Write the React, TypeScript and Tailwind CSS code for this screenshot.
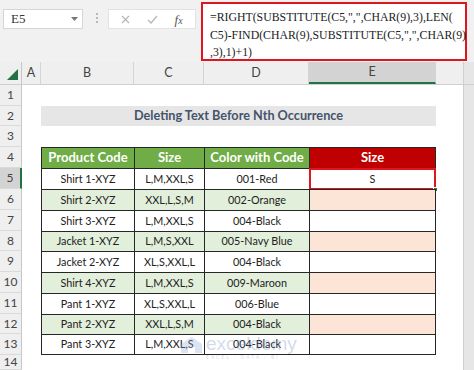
import React from 'react';

type Row = {
  product: string;
  size: string;
  color: string;
  result?: string;
};

const rows: Row[] = [
  { product: 'Shirt 1-XYZ', size: 'L,M,XXL,S', color: '001-Red', result: 'S' },
  { product: 'Shirt 2-XYZ', size: 'XXL,L,S,M', color: '002-Orange' },
  { product: 'Shirt 3-XYZ', size: 'L,M,XXL,S', color: '004-Black' },
  { product: 'Jacket 1-XYZ', size: 'L,M,S,XXL', color: '005-Navy Blue' },
  { product: 'Jacket 2-XYZ', size: 'XL,S,XXL,L', color: '004-Black' },
  { product: 'Shirt 4-XYZ', size: 'L,M,XXL,S', color: '009-Maroon' },
  { product: 'Pant 1-XYZ', size: 'XL,S,XXL,L', color: '006-Blue' },
  { product: 'Pant 2-XYZ', size: 'XXL,L,S,M', color: '004-Black' },
  { product: 'Pant 3-XYZ', size: 'L,M,XXL,S', color: '004-Black' },
];

// row heights for rows 1..14 (row 14 is cut off by the window)
const heights = [21, 20, 21, 21, 21, 21, 21, 20, 21, 21, 21, 20, 21, 15];

function RowHead({ n, h, active }: { n: number; h: number; active?: boolean }) {
  return (
    <div
      className={
        'w-[22px] shrink-0 flex items-center justify-center text-[12px] text-[#444] border-b border-[#dadada] ' +
        (active ? 'bg-[#d3d3d3] border-r-2 border-r-[#217346]' : 'bg-[#efefef] border-r border-r-[#c6c6c6]')
      }
      style={{ height: h }}
    >
      {n}
    </div>
  );
}

function Cell({
  w,
  className = '',
  children,
}: {
  w: string;
  className?: string;
  children?: React.ReactNode;
}) {
  return (
    <div className={`${w} shrink-0 flex items-center justify-center whitespace-nowrap border-l border-t border-[#262626] ${className}`}>
      {children}
    </div>
  );
}

function TopBar() {
  return (
    <div className="h-[62px] bg-[#f1f1f1] flex items-start relative">
      <div className="ml-[3px] mt-[9px] w-[80px] h-[20px] bg-white border border-[#d6d6d6] flex items-center justify-between pl-[7px] pr-[4px]">
        <span className="font-['Liberation_Serif',serif] text-[13px] text-[#333]">E5</span>
        <svg width="7" height="4" viewBox="0 0 7 4">
          <path d="M0 0 L7 0 L3.5 4 Z" fill="#777" />
        </svg>
      </div>
      <div className="mt-[13px] ml-[13px] flex flex-col gap-[2px]">
        <span className="w-[2px] h-[2px] bg-[#b8b8b8]" />
        <span className="w-[2px] h-[2px] bg-[#b8b8b8]" />
        <span className="w-[2px] h-[2px] bg-[#b8b8b8]" />
      </div>
      <div className="ml-[10px] mt-[9px] w-[88px] h-[20px] bg-white border border-[#e2e2e2] flex items-center justify-around px-[4px]">
        <svg width="9" height="9" viewBox="0 0 9 9">
          <path d="M1 1 L8 8 M8 1 L1 8" stroke="#b5b5b5" strokeWidth="1.2" />
        </svg>
        <svg width="11" height="9" viewBox="0 0 11 9">
          <path d="M1 5 L4 8 L10 1" stroke="#b5b5b5" strokeWidth="1.2" fill="none" />
        </svg>
        <span className="font-['Liberation_Serif',serif] italic text-[13px] text-[#555] leading-none">
          f<span className="text-[10px]">x</span>
        </span>
      </div>
      <div className="ml-[5px] mt-[2px] w-[266px] h-[59px] bg-white border-2 border-[#e0161e] pl-[7px] pt-[5px] font-['Liberation_Serif',serif] text-[11.8px] leading-[17.5px] text-[#222] whitespace-nowrap">
        <div>=RIGHT(SUBSTITUTE(C5,",",CHAR(9),3),LEN(</div>
        <div>C5)-FIND(CHAR(9),SUBSTITUTE(C5,",",CHAR(9)</div>
        <div>,3),1)+1)</div>
      </div>
    </div>
  );
}

function ColumnHeader() {
  const col = 'shrink-0 h-full flex items-center justify-center border-r border-[#d4d4d4]';
  return (
    <div className="h-[23px] flex bg-[#efefef] border-b border-[#cfcfcf] text-[12.5px] text-[#444]">
      <div className="w-[22px] shrink-0 flex items-end justify-end pr-[3px] pb-[4px] border-r border-[#c6c6c6]">
        <svg width="11" height="11" viewBox="0 0 11 11">
          <path d="M11 0 L11 11 L0 11 Z" fill="#217346" />
        </svg>
      </div>
      <div className={`w-[19px] ${col}`}>A</div>
      <div className={`w-[93px] ${col}`}>B</div>
      <div className={`w-[70px] ${col}`}>C</div>
      <div className={`w-[105px] ${col}`}>D</div>
      <div className={`w-[127px] ${col} bg-[#d3d3d3] border-b-2 border-b-[#217346]`}>E</div>
      <div className="w-[27px] shrink-0" />
      <div className="w-[11px] shrink-0 bg-[#e6e6e6] border-l border-[#cfcfcf]" />
    </div>
  );
}

export default function App() {
  return (
    <div className="w-[474px] h-[370px] overflow-hidden bg-white relative font-['Lato','Noto_Sans',sans-serif]">
      <TopBar />
      <ColumnHeader />
      <div className="flex">
        <div className="flex flex-col">
          {heights.map((h, i) => {
            const n = i + 1;
            const r = n >= 5 && n <= 13 ? rows[n - 5] : undefined;
            const even = n % 2 === 0;
            return (
              <div key={n} className="flex" style={{ height: h }}>
                <RowHead n={n} h={h} active={n === 5} />
                <div className="w-[19px] shrink-0" />
                {n === 2 && (
                  <div className="w-[395px] shrink-0 bg-[#e7e6e6] flex items-center justify-center font-bold text-[12.7px] text-[#44546a]">
                    Deleting Text Before Nth Occurrence
                  </div>
                )}
                {n === 4 && (
                  <div className="flex font-bold text-[13px] text-white">
                    <Cell w="w-[93px]" className="bg-[#70ad47]">Product Code</Cell>
                    <Cell w="w-[70px]" className="bg-[#70ad47]">Size</Cell>
                    <Cell w="w-[105px]" className="bg-[#70ad47]">Color with Code</Cell>
                    <Cell w="w-[127px]" className="bg-[#c00000] border-r">Size</Cell>
                  </div>
                )}
                {r && (
                  <div className={`flex text-[10.8px] text-[#222] ${n === 13 ? '[&>div]:border-b' : ''}`}>
                    <Cell w="w-[93px]" className={even ? 'bg-[#e2efda]' : 'bg-white'}>{r.product}</Cell>
                    <Cell w="w-[70px]" className={even ? 'bg-[#e2efda]' : 'bg-white'}>{r.size}</Cell>
                    <Cell w="w-[105px]" className={even ? 'bg-[#e2efda]' : 'bg-white'}>{r.color}</Cell>
                    <Cell w="w-[127px]" className={`border-r relative ${even ? 'bg-[#fce4d6]' : 'bg-white'}`}>
                      {r.result}
                      {n === 5 && (
                        <>
                          <div className="absolute -left-px -top-px -right-px -bottom-px border-2 border-[#e0161e]" />
                          <div className="absolute -right-[3px] -bottom-[3px] w-[5px] h-[5px] bg-[#217346] border border-white" />
                        </>
                      )}
                    </Cell>
                  </div>
                )}
              </div>
            );
          })}
        </div>
        <div className="flex-1" />
        <div className="w-[11px] shrink-0 bg-[#e6e6e6] border-l border-[#cfcfcf]" />
      </div>

      <div className="absolute left-[180px] top-[334px] flex items-start gap-[3px] opacity-30 pointer-events-none">
        <svg width="23" height="18" viewBox="0 0 23 18" className="mt-[2px]">
          <path d="M1 8 L11.5 1 L22 8 L22 17 L1 17 Z" fill="#8ea6d6" />
          <path d="M8 17 L8 11 L15 11 L15 17" fill="#ffffff" />
        </svg>
        <div className="flex flex-col leading-none">
          <span className="text-[19px] text-[#6f8bc4] font-['Liberation_Sans',sans-serif]">exceldemy</span>
          <span className="text-[5px] text-[#6f8bc4] tracking-[2px] mt-[2px]">EXCEL · DATA · BI</span>
        </div>
      </div>
    </div>
  );
}
